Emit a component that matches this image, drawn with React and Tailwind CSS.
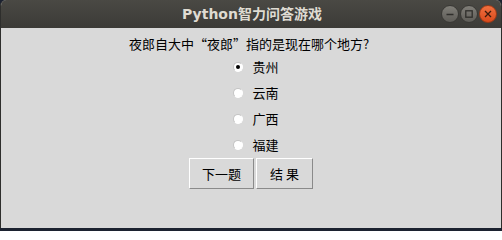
import { useState } from "react";

const options = ["贵州", "云南", "广西", "福建"];

function WinButton({ kind }) {
  if (kind === "close") {
    return (
      <div className="w-[18px] h-[18px] rounded-full bg-gradient-to-b from-[#f0703f] to-[#d9491a] border border-[#9c3a17] flex items-center justify-center">
        <svg width="8" height="8" viewBox="0 0 8 8">
          <path d="M1 1L7 7M7 1L1 7" stroke="#3b1a0c" strokeWidth="1.3" />
        </svg>
      </div>
    );
  }
  return (
    <div className="w-[18px] h-[18px] rounded-full bg-gradient-to-b from-[#807e78] to-[#5e5c57] border border-[#3a3935] flex items-center justify-center">
      {kind === "min" ? (
        <svg width="8" height="8" viewBox="0 0 8 8">
          <path d="M0.5 4.5H7.5" stroke="#2f2e2b" strokeWidth="1.4" />
        </svg>
      ) : (
        <svg width="8" height="8" viewBox="0 0 8 8">
          <rect x="0.8" y="0.8" width="6.4" height="6.4" fill="none" stroke="#2f2e2b" strokeWidth="1.3" />
        </svg>
      )}
    </div>
  );
}

function Radio({ checked }) {
  return (
    <span className="w-[10px] h-[10px] shrink-0 rounded-full bg-white border border-[#c4c4c4] border-b-white border-r-white flex items-center justify-center">
      {checked && <span className="w-[4px] h-[4px] rounded-full bg-black" />}
    </span>
  );
}

export default function App() {
  const [answer, setAnswer] = useState(0);

  return (
    <div className="w-[502px] h-[231px] bg-[#1c2230] overflow-hidden" style={{ fontFamily: '"Noto Sans CJK SC", sans-serif' }}>
      <div className="h-[228px] flex flex-col bg-[#d9d9d9] border-x border-[#2e2e2c] rounded-t-[6px] overflow-hidden">
        {/* title bar */}
        <div className="h-[28px] shrink-0 bg-gradient-to-b from-[#4a4944] to-[#3c3b37] flex items-center relative">
          <div
            className="flex-1 text-center text-[14px] font-bold text-[#dfdbd2] pl-[2px]"
            style={{ fontFamily: '"DejaVu Sans", "Noto Sans CJK SC", sans-serif' }}
          >
            Python智力问答游戏
          </div>
          <div className="absolute right-[4px] top-[5px] flex gap-[1px]">
            <WinButton kind="min" />
            <WinButton kind="max" />
            <WinButton kind="close" />
          </div>
        </div>

        {/* body */}
        <div className="flex flex-col items-center pt-[6px] text-[13px] text-black">
          <div className="h-[20px] leading-[20px] pr-[4px]">夜郎自大中“夜郎”指的是现在哪个地方?</div>

          {options.map((o, i) => (
            <div key={o} className="h-[26px] flex items-center gap-[9px] cursor-default ml-[10px]" onClick={() => setAnswer(i)}>
              <Radio checked={answer === i} />
              <span>{o}</span>
            </div>
          ))}

          <div className="flex gap-[2px]">
            <button className="w-[65px] h-[31px] border border-t-white border-l-white border-b-[#8a8a8a] border-r-[#8a8a8a] bg-[#d9d9d9] text-[13px]">
              下一题
            </button>
            <button className="w-[57px] h-[31px] border border-t-white border-l-white border-b-[#8a8a8a] border-r-[#8a8a8a] bg-[#d9d9d9] text-[13px]">
              结 果
            </button>
          </div>
        </div>
      </div>
    </div>
  );
}
